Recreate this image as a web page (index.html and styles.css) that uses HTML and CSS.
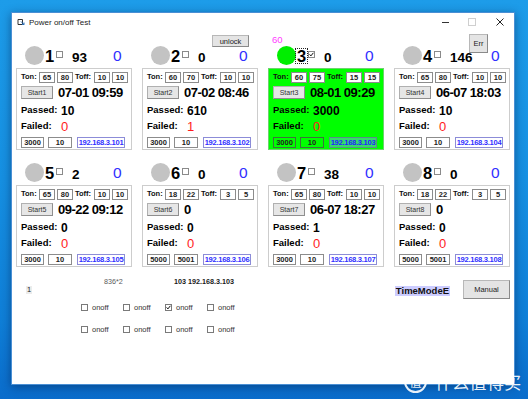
FILE: index.html
```html
<!DOCTYPE html>
<html>
<head>
<meta charset="utf-8">
<link rel="stylesheet" href="styles.css">
</head>
<body>
<div class="window">
  <div class="titlebar">
    <svg class="appicon" width="8" height="8" viewBox="0 0 8 8"><path d="M1 1.5h4.5v5H1z" fill="none" stroke="#333" stroke-width="1"/><path d="M4 3.5l3 3M7 4.5v2H5" fill="none" stroke="#2a6fb8" stroke-width="1"/></svg>
    <span class="title">Power on/off Test</span>
    <div class="controls">
      <span class="ctl-min"></span>
      <span class="ctl-max"></span>
      <svg class="ctl-close" width="8" height="8" viewBox="0 0 8 8"><path d="M0.5 0.5l7 7M7.5 0.5l-7 7" stroke="#222" stroke-width="1"/></svg>
    </div>
  </div>

  <div class="grid">
    <!-- 1 -->
    <div class="unit">
      <div class="head"><span class="dot"></span><span class="num">1</span><span class="cb"></span><span class="count">93</span><span class="blue">0</span></div>
      <div class="card">
        <div class="ton"><span class="lbl lbl-ton">Ton:</span><span class="box">65</span><span class="box">80</span><span class="lbl lbl-toff">Toff:</span><span class="box">10</span><span class="box">10</span></div>
        <div class="startrow"><span class="btn-start">Start1</span><span class="date">07-01 09:59</span></div>
        <div class="stat"><span class="stat-lbl">Passed:</span><span class="stat-val">10</span></div>
        <div class="stat stat-f"><span class="stat-lbl">Failed:</span><span class="red">0</span></div>
        <div class="brow"><span class="box b1">3000</span><span class="box b2">10</span><span class="box ip">192.168.3.101</span></div>
      </div>
    </div>
    <!-- 2 -->
    <div class="unit">
      <span class="btn unlock">unlock</span>
      <div class="head"><span class="dot"></span><span class="num">2</span><span class="cb"></span><span class="count">0</span><span class="blue">0</span></div>
      <div class="card">
        <div class="ton"><span class="lbl lbl-ton">Ton:</span><span class="box">60</span><span class="box">70</span><span class="lbl lbl-toff">Toff:</span><span class="box">10</span><span class="box">10</span></div>
        <div class="startrow"><span class="btn-start">Start2</span><span class="date">07-02 08:46</span></div>
        <div class="stat"><span class="stat-lbl">Passed:</span><span class="stat-val">610</span></div>
        <div class="stat stat-f"><span class="stat-lbl">Failed:</span><span class="red">1</span></div>
        <div class="brow"><span class="box b1">3000</span><span class="box b2">10</span><span class="box ip">192.168.3.102</span></div>
      </div>
    </div>
    <!-- 3 -->
    <div class="unit">
      <span class="pink">60</span>
      <div class="head"><span class="dot dot-on"></span><span class="num"><span class="focus">3</span></span><span class="cb"><svg width="5" height="5" viewBox="0 0 5 5"><path d="M0.6 2.4L1.9 3.9L4.4 0.8" fill="none" stroke="#111" stroke-width="1"/></svg></span><span class="count">0</span><span class="blue">0</span></div>
      <div class="card on">
        <div class="ton"><span class="lbl lbl-ton">Ton:</span><span class="box">60</span><span class="box">75</span><span class="lbl lbl-toff">Toff:</span><span class="box">15</span><span class="box">15</span></div>
        <div class="startrow"><span class="btn-start">Start3</span><span class="date">08-01 09:29</span></div>
        <div class="stat"><span class="stat-lbl">Passed:</span><span class="stat-val">3000</span></div>
        <div class="stat stat-f"><span class="stat-lbl">Failed:</span><span class="red">0</span></div>
        <div class="brow"><span class="box b1">3000</span><span class="box b2">10</span><span class="box ip">192.168.3.103</span></div>
      </div>
    </div>
    <!-- 4 -->
    <div class="unit">
      <span class="btn err">Err</span>
      <div class="head"><span class="dot"></span><span class="num">4</span><span class="cb"></span><span class="count">146</span><span class="blue">0</span></div>
      <div class="card">
        <div class="ton"><span class="lbl lbl-ton">Ton:</span><span class="box">65</span><span class="box">80</span><span class="lbl lbl-toff">Toff:</span><span class="box">10</span><span class="box">10</span></div>
        <div class="startrow"><span class="btn-start">Start4</span><span class="date">06-07 18:03</span></div>
        <div class="stat"><span class="stat-lbl">Passed:</span><span class="stat-val">10</span></div>
        <div class="stat stat-f"><span class="stat-lbl">Failed:</span><span class="red">0</span></div>
        <div class="brow"><span class="box b1">3000</span><span class="box b2">10</span><span class="box ip">192.168.3.104</span></div>
      </div>
    </div>
    <!-- 5 -->
    <div class="unit">
      <div class="head"><span class="dot"></span><span class="num">5</span><span class="cb"></span><span class="count">2</span><span class="blue">0</span></div>
      <div class="card">
        <div class="ton"><span class="lbl lbl-ton">Ton:</span><span class="box">65</span><span class="box">80</span><span class="lbl lbl-toff">Toff:</span><span class="box">10</span><span class="box">10</span></div>
        <div class="startrow"><span class="btn-start">Start5</span><span class="date">09-22 09:12</span></div>
        <div class="stat"><span class="stat-lbl">Passed:</span><span class="stat-val">0</span></div>
        <div class="stat stat-f"><span class="stat-lbl">Failed:</span><span class="red">0</span></div>
        <div class="brow"><span class="box b1">3000</span><span class="box b2">10</span><span class="box ip">192.168.3.105</span></div>
      </div>
    </div>
    <!-- 6 -->
    <div class="unit">
      <div class="head"><span class="dot"></span><span class="num">6</span><span class="cb"></span><span class="count">0</span><span class="blue">0</span></div>
      <div class="card">
        <div class="ton"><span class="lbl lbl-ton">Ton:</span><span class="box">18</span><span class="box">22</span><span class="lbl lbl-toff">Toff:</span><span class="box">3</span><span class="box">5</span></div>
        <div class="startrow"><span class="btn-start">Start6</span><span class="date">0</span></div>
        <div class="stat"><span class="stat-lbl">Passed:</span><span class="stat-val">0</span></div>
        <div class="stat stat-f"><span class="stat-lbl">Failed:</span><span class="red">0</span></div>
        <div class="brow"><span class="box b1">5000</span><span class="box b2">5001</span><span class="box ip">192.168.3.106</span></div>
      </div>
    </div>
    <!-- 7 -->
    <div class="unit">
      <div class="head"><span class="dot"></span><span class="num">7</span><span class="cb"></span><span class="count">38</span><span class="blue">0</span></div>
      <div class="card">
        <div class="ton"><span class="lbl lbl-ton">Ton:</span><span class="box">65</span><span class="box">80</span><span class="lbl lbl-toff">Toff:</span><span class="box">10</span><span class="box">10</span></div>
        <div class="startrow"><span class="btn-start">Start7</span><span class="date">06-07 18:27</span></div>
        <div class="stat"><span class="stat-lbl">Passed:</span><span class="stat-val">1</span></div>
        <div class="stat stat-f"><span class="stat-lbl">Failed:</span><span class="red">0</span></div>
        <div class="brow"><span class="box b1">3000</span><span class="box b2">10</span><span class="box ip">192.168.3.107</span></div>
      </div>
    </div>
    <!-- 8 -->
    <div class="unit">
      <div class="head"><span class="dot"></span><span class="num">8</span><span class="cb"></span><span class="count">0</span><span class="blue">0</span></div>
      <div class="card">
        <div class="ton"><span class="lbl lbl-ton">Ton:</span><span class="box">18</span><span class="box">22</span><span class="lbl lbl-toff">Toff:</span><span class="box">3</span><span class="box">5</span></div>
        <div class="startrow"><span class="btn-start">Start8</span><span class="date">0</span></div>
        <div class="stat"><span class="stat-lbl">Passed:</span><span class="stat-val">0</span></div>
        <div class="stat stat-f"><span class="stat-lbl">Failed:</span><span class="red">0</span></div>
        <div class="brow"><span class="box b1">5000</span><span class="box b2">5001</span><span class="box ip">192.168.3.108</span></div>
      </div>
    </div>
  </div>

  <div class="bottom">
    <div class="bleft">
      <div class="line1"><span class="res">836*2</span><span class="sel">103 192.168.3.103</span></div>
      <div class="line2"><span class="one">1</span></div>
      <div class="chkrow">
        <span class="chk"><span class="cb2"></span>onoff</span>
        <span class="chk"><span class="cb2"></span>onoff</span>
        <span class="chk"><span class="cb2"><svg width="5" height="5" viewBox="0 0 5 5"><path d="M0.6 2.4L1.9 3.9L4.4 0.8" fill="none" stroke="#111" stroke-width="1"/></svg></span>onoff</span>
        <span class="chk"><span class="cb2"></span>onoff</span>
      </div>
      <div class="chkrow chkrow2">
        <span class="chk"><span class="cb2"></span>onoff</span>
        <span class="chk"><span class="cb2"></span>onoff</span>
        <span class="chk"><span class="cb2"></span>onoff</span>
        <span class="chk"><span class="cb2"></span>onoff</span>
      </div>
    </div>
    <div class="bright">
      <span class="mode">TimeModeE</span>
      <span class="btn manual">Manual</span>
    </div>
  </div>
</div>

<div class="watermark"><span class="wm-logo">值</span><span class="wm-text">什么值得买</span></div>
</body>
</html>
```
FILE: styles.css
```css
html, body {
  margin: 0;
  padding: 0;
}
body {
  width: 528px;
  height: 399px;
  overflow: hidden;
  position: relative;
  box-sizing: border-box;
  padding: 12px 0 0 11px;
  background: linear-gradient(180deg, #1d9ce9 0%, #1690e2 45%, #0f7fd8 80%, #0a6ccb 100%);
  font-family: "Liberation Sans", Arial, sans-serif;
  color: #111;
}

.window {
  width: 504px;
  height: 373px;
  box-sizing: border-box;
  background: #fff;
  border: 1px solid #4a8fd4;
  box-shadow: 0 2px 9px rgba(0, 20, 60, 0.45);
}

/* title bar */
.titlebar {
  height: 18px;
  display: flex;
  align-items: center;
  padding-left: 5px;
}
.appicon { display: block; }
.title {
  margin-left: 4px;
  font-size: 8px;
  color: #222;
}
.controls {
  margin-left: auto;
  display: flex;
  align-items: center;
  margin-right: 10px;
}
.ctl-min {
  width: 7px;
  height: 1px;
  background: #333;
}
.ctl-max {
  width: 6px;
  height: 6px;
  border: 1px solid #cfcfcf;
  margin-left: 19px;
}
.ctl-close {
  display: block;
  margin-left: 20px;
}

/* grid of units */
.grid {
  display: grid;
  grid-template-columns: repeat(4, 116px);
  column-gap: 10px;
  row-gap: 13px;
  padding: 15px 0 0 4px;
}
.unit { position: relative; }

.head {
  display: grid;
  grid-template-columns: 19px 12px 7px 50px auto;
  align-items: center;
  height: 19px;
  margin-bottom: 3px;
  padding-left: 9px;
}
.dot {
  width: 19px;
  height: 19px;
  border-radius: 50%;
  background: #c3c3c3;
}
.dot-on { background: #00ee00; }
.num {
  font-size: 16.5px;
  font-weight: bold;
  color: #000;
  padding-left: 1px;
  line-height: 16px;
}
.focus {
  display: inline-block;
  outline: 1px dotted #222;
  line-height: 14px;
  padding: 0 1px;
  margin-left: -1px;
}
.cb {
  width: 7px;
  height: 7px;
  box-sizing: border-box;
  border: 1px solid #8a8a8a;
  background: #fff;
  display: flex;
  align-items: center;
  justify-content: center;
  margin-top: -2px;
}
.cb svg { display: block; }
.count {
  padding-left: 9px;
  padding-top: 3px;
  font-size: 13.5px;
  font-weight: bold;
  color: #000;
}
.blue {
  font-size: 15.5px;
  color: #2f2fff;
}

/* overlays above headers */
.pink {
  position: absolute;
  left: 4px;
  top: -12px;
  font-size: 9.5px;
  color: #ff3cff;
}
.btn {
  box-sizing: border-box;
  background: #e4e4e4;
  border: 1px solid #b8b8b8;
  border-right-color: #8a8a8a;
  border-bottom-color: #8a8a8a;
  display: flex;
  align-items: center;
  justify-content: center;
  font-size: 7.5px;
  color: #222;
}
.unlock {
  position: absolute;
  left: 70px;
  top: -11px;
  width: 37px;
  height: 12px;
}
.err {
  position: absolute;
  left: 75px;
  top: -12px;
  width: 19px;
  height: 19px;
  z-index: 2;
}

/* card */
.card {
  height: 82px;
  box-sizing: border-box;
  border: 1px solid #cdcdcd;
  padding: 0 3px 0 4px;
  display: flex;
  flex-direction: column;
}
.card.on {
  background: #00ff00;
  border-color: #6cd46c;
}

.ton {
  display: flex;
  align-items: center;
  height: 11px;
  margin-top: 3px;
}
.lbl {
  font-size: 7.5px;
  font-weight: bold;
  color: #111;
  line-height: 9px;
  align-self: flex-start;
}
.lbl-ton { width: 18px; }
.lbl-toff { width: 19px; margin-left: 2px; }
.box {
  box-sizing: border-box;
  width: 16px;
  height: 11px;
  border: 1px solid #8c8c8c;
  background: #fff;
  font-size: 7.5px;
  font-weight: bold;
  color: #222;
  text-align: center;
  line-height: 9px;
  white-space: nowrap;
  overflow: hidden;
}
.box + .box { margin-left: 2px; }

.startrow {
  display: flex;
  align-items: center;
  height: 13px;
  margin-top: 3px;
}
.btn-start {
  box-sizing: border-box;
  width: 32px;
  height: 13px;
  border: 1px solid #b0b0b0;
  border-right-color: #8f8f8f;
  border-bottom-color: #8f8f8f;
  background: #e6e6e6;
  font-size: 7px;
  color: #333;
  display: flex;
  align-items: center;
  justify-content: center;
}
.date {
  margin-left: 5px;
  font-size: 13px;
  font-weight: bold;
  letter-spacing: -0.5px;
  color: #000;
}

.stat {
  display: flex;
  align-items: center;
  height: 15px;
  margin-top: 3px;
}
.stat-f { margin-top: 1px; }
.stat-lbl {
  width: 40px;
  font-size: 9.5px;
  font-weight: bold;
  color: #000;
}
.stat-val {
  font-size: 12px;
  font-weight: bold;
  color: #000;
  padding-top: 2px;
}
.red {
  font-size: 13px;
  color: #ff1c1c;
  padding-top: 2px;
}

.brow {
  display: flex;
  height: 11px;
  margin-top: 4px;
}
.brow .b1 { width: 23px; }
.brow .b2 { width: 24px; margin-left: 4px; }
.brow .ip {
  width: 48px;
  margin-left: 5px;
  font-size: 7.6px;
  color: #3030ff;
  border-color: #8c8cd8;
  letter-spacing: -0.3px;
}
.card.on .brow .b1,
.card.on .brow .b2 {
  background: transparent;
  border-color: #3f6f3f;
}
.card.on .brow .ip {
  background: #33dd66;
  border-color: #5a8a8a;
  color: #2424ff;
}

/* bottom area */
.bottom {
  display: flex;
  height: 105px;
}
.bleft { flex: 1; }
.line1 {
  display: flex;
  align-items: center;
  height: 9px;
  margin-top: 10px;
  padding-left: 92px;
  font-size: 7.2px;
}
.res { width: 70px; color: #5a5a5a; }
.sel { font-weight: bold; color: #1a1a1a; }
.line2 {
  height: 8px;
  margin-top: 0;
  padding-left: 14px;
}
.one {
  display: inline-block;
  font-size: 7.5px;
  background: #ececec;
  padding: 0 1px;
  line-height: 8px;
  color: #222;
  vertical-align: top;
}
.chkrow {
  display: flex;
  height: 10px;
  margin-top: 8px;
  padding-left: 69px;
}
.chkrow2 { margin-top: 12px; }
.chk {
  width: 42px;
  display: flex;
  align-items: center;
  font-size: 7.5px;
  color: #333;
}
.cb2 {
  width: 7px;
  height: 7px;
  box-sizing: border-box;
  border: 1px solid #7a7a7a;
  background: #fff;
  margin-right: 4px;
  display: flex;
  align-items: center;
  justify-content: center;
}
.cb2 svg { display: block; }

.bright {
  display: flex;
  align-items: flex-start;
  padding-top: 13px;
  margin-right: 4px;
}
.mode {
  margin-top: 6px;
  margin-right: 13px;
  background: #ccccff;
  font-size: 9.5px;
  font-weight: bold;
  color: #111;
  line-height: 10px;
  padding: 0 1px;
}
.manual {
  width: 47px;
  height: 19px;
  font-size: 7.5px;
}

/* watermark */
.watermark {
  position: absolute;
  left: 404px;
  top: 370px;
  display: flex;
  align-items: center;
  color: rgba(255, 255, 255, 0.92);
  font-family: "Noto Sans CJK SC", sans-serif;
}
.wm-logo {
  width: 19px;
  height: 19px;
  border: 2px solid rgba(255, 255, 255, 0.9);
  border-radius: 50%;
  font-size: 12px;
  line-height: 19px;
  text-align: center;
}
.wm-text {
  margin-left: 8px;
  font-size: 17px;
  letter-spacing: 0.3px;
  line-height: 20px;
}
```
